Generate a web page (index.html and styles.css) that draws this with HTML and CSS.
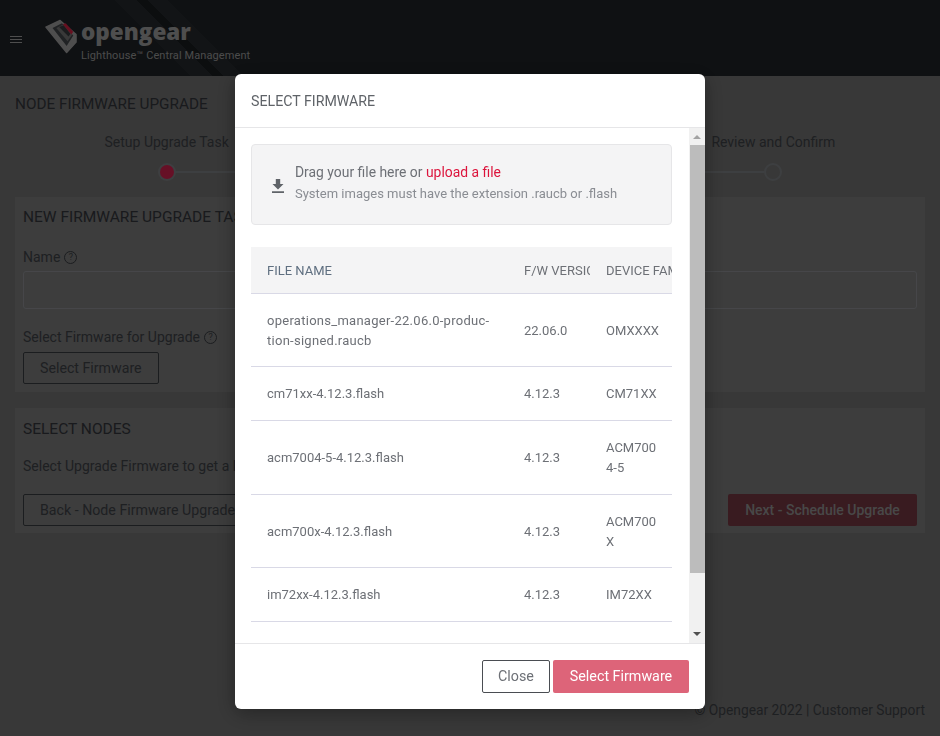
FILE: index.html
```html
<!DOCTYPE html>
<html lang="en">
<head>
<meta charset="utf-8">
<title>Node Firmware Upgrade</title>
<link rel="stylesheet" href="styles.css">
</head>
<body>
<div class="page">
  <header class="topbar">
    <div class="burger"><i></i><i></i><i></i></div>
    <svg class="logo-mark" viewBox="0 0 34 36" width="32" height="35">
      <path d="M1 8 L16 1 L33 16 L33 24 L23 35 Z" fill="#c4c4c4" stroke="#c4c4c4" stroke-linejoin="round" stroke-width="1.500"/>
      <path d="M8 9 L18 4 L30 17 L23 28 Z" fill="#50555a"/>
      <path d="M12 9 L20 5 L29 16 L24 23 Z" fill="#8f8f8f"/>
      <path d="M15 8 L20 6 L27 15 L25 18 Z" fill="#44484c"/>
      <path d="M19 5 L22 4 L30 13 L28 16 Z" fill="#ff2a50"/>
    </svg>
    <div class="brand">
      <div class="brand-name">opengear</div>
      <div class="brand-sub">Lighthouse™ Central Management</div>
    </div>
  </header>
  <main class="content">
    <h1 class="page-title">NODE FIRMWARE UPGRADE</h1>
    <div class="step-labels">
      <span>Setup Upgrade Task</span>
      <span>Schedule Upgrade</span>
      <span>Review and Confirm</span>
    </div>
    <div class="step-track">
      <span class="dot dot-active"></span><span class="line"></span><span class="dot"></span><span class="line"></span><span class="dot"></span>
    </div>
    <section class="card card-task">
      <h2 class="card-title">NEW FIRMWARE UPGRADE TASK</h2>
      <label class="field-label">Name <span class="help">?</span></label>
      <div class="text-input"></div>
      <label class="field-label field-label-second">Select Firmware for Upgrade <span class="help">?</span></label>
      <button class="btn-ghost" type="button">Select Firmware</button>
    </section>
    <section class="card card-nodes">
      <h2 class="card-title">SELECT NODES</h2>
      <p class="hint">Select Upgrade Firmware to get a list of compatible nodes</p>
      <div class="nav-row">
        <button class="btn-ghost" type="button">Back - Node Firmware Upgrade</button>
        <button class="btn-next" type="button">Next - Schedule Upgrade</button>
      </div>
    </section>
  </main>
  <footer class="page-foot">© Opengear 2022 | Customer Support</footer>
</div>

<div class="overlay">
  <div class="modal">
    <div class="modal-head">SELECT FIRMWARE</div>
    <div class="modal-body">
      <div class="modal-scroll">
        <div class="dropzone">
          <svg class="drop-icon" viewBox="0 0 12 14" width="12" height="14"><path d="M3.800 0h4.400v5H11.500L6 10.500 .500 5H3.800z M0 12.200h12V14H0z" fill="#5f6368"/></svg>
          <div>
            <div class="drop-main">Drag your file here or <a class="drop-link">upload a file</a></div>
            <div class="drop-sub">System images must have the extension .raucb or .flash</div>
          </div>
        </div>
        <div class="table-wrap">
          <table class="fw-table">
            <colgroup><col class="col-name"><col class="col-ver"><col class="col-fam"></colgroup>
            <thead>
              <tr><th class="th-name">FILE NAME</th><th><div class="clip">F/W VERSION</div></th><th><div class="clip">DEVICE FAMILY</div></th></tr>
            </thead>
            <tbody>
              <tr class="r-tall"><td class="long-name">operations_manager-22.06.0-produc-<br>tion-signed.raucb</td><td>22.06.0</td><td>OMXXXX</td></tr>
              <tr class="r-short"><td>cm71xx-4.12.3.flash</td><td>4.12.3</td><td>CM71XX</td></tr>
              <tr class="r-tall2"><td>acm7004-5-4.12.3.flash</td><td>4.12.3</td><td>ACM700<br>4-5</td></tr>
              <tr class="r-tall"><td>acm700x-4.12.3.flash</td><td>4.12.3</td><td>ACM700<br>X</td></tr>
              <tr class="r-short"><td>im72xx-4.12.3.flash</td><td>4.12.3</td><td>IM72XX</td></tr>
            </tbody>
          </table>
        </div>
      </div>
      <div class="scrollbar">
        <span class="arrow arrow-up"></span>
        <div class="track"><div class="thumb"></div></div>
        <span class="arrow arrow-down"></span>
      </div>
    </div>
    <div class="modal-foot">
      <button class="btn-close" type="button">Close</button>
      <button class="btn-select" type="button">Select Firmware</button>
    </div>
  </div>
</div>
</body>
</html>
```
FILE: styles.css
```css
* { box-sizing: border-box; }
html, body { margin: 0; height: 100%; }
body {
  font-family: Roboto, "Liberation Sans", sans-serif;
  font-size: 14px;
  color: #4c5056;
  background: #8c8c8c;
  overflow: hidden;
}
.page { height: 736px; display: flex; flex-direction: column; }

.topbar {
  height: 76px;
  display: flex;
  align-items: center;
  flex: none;
  background:
    linear-gradient(45deg, transparent 0 135px, #2e3338 135px 150px, #1f2327 150px 158px, #2e3338 158px 172px, transparent 172px),
    #262b30;
}
.burger { width: 12px; margin: 2px 0 0 10px; display: flex; flex-direction: column; gap: 2px; }
.burger i { display: block; height: 1px; background: #c4c4c4; }
.logo-mark { margin: -4px 0 0 23px; flex: none; }
.brand { margin: 9px 0 0 4px; }
.brand-name {
  font-family: "Open Sans", sans-serif;
  font-weight: 800;
  font-size: 22.500px;
  line-height: 24px;
  color: #c4c4c4;
  margin-top: -3px;
}
.brand-sub { font-size: 11px; line-height: 14px; color: #bcbcbc; margin-top: 5px; letter-spacing: .1px; }

.content { flex: 1; padding: 18px 15px 0; }
.page-title { margin: 0; font-size: 15.300px; line-height: 20px; font-weight: 400; color: #3f4349; }
.step-labels { display: grid; grid-template-columns: repeat(3, 1fr); margin-top: 18px; text-align: center; line-height: 20px; }
.step-track { display: flex; align-items: center; margin: 11px 143px 0; }
.dot { width: 18px; height: 18px; border-radius: 50%; border: 2px solid #9a9ea2; flex: none; }
.dot-active { width: 14px; height: 14px; margin-left: 2px; border: 0; background: #ff2a60; box-shadow: 0 0 0 2px #9a9ea2; }
.line { flex: 1; height: 2px; background: #9a9ea2; }

.card { background: #989898; padding: 10px 8px; }
.card-task { margin-top: 16px; height: 195px; }
.card-nodes { margin-top: 16px; height: 125px; }
.card-title { margin: 0; font-size: 15.500px; line-height: 20px; font-weight: 400; color: #3f4349; }
.card-nodes .card-title { margin-top: 1px; }
.field-label { display: flex; align-items: center; gap: 4px; line-height: 18px; margin-top: 21px; }
.field-label-second { margin-top: 19px; }
.help {
  width: 13px; height: 13px; border: 1px solid #45494f; border-radius: 50%;
  font-size: 9px; line-height: 11px; text-align: center;
}
.text-input { height: 38px; margin-top: 5px; border: 1px solid #aeb0b6; border-radius: 3px; }
.btn-ghost {
  display: block;
  height: 32px; padding: 0 16px;
  margin-top: 6px;
  border: 1px solid #45494f; border-radius: 2px; background: transparent;
  font: inherit; font-size: 14.200px; color: #4c5056;
}
.hint { margin: 17px 0 0; line-height: 20px; }
.nav-row { display: flex; justify-content: space-between; margin-top: 9px; }
.nav-row .btn-ghost { margin-top: 9px; }
.btn-next {
  height: 32px; width: 189px; margin-top: 9px;
  border: 0; border-radius: 2px; background: #8f4450;
  font: inherit; font-weight: 500; color: #b4b4b4;
}
.page-foot { text-align: right; padding: 0 15px 17px; line-height: 18px; font-size: 13.800px; }

.overlay { position: fixed; inset: 0; background: rgba(0, 0, 0, .6); }
.modal {
  width: 470px; height: 635px; margin: 74px auto 0;
  display: flex; flex-direction: column;
  background: #fff; border-radius: 6px;
  box-shadow: 0 4px 20px rgba(0, 0, 0, .35);
  overflow: hidden;
}
.modal-head {
  height: 54px; flex: none; padding: 0 16px;
  display: flex; align-items: center;
  font-size: 14.200px; font-weight: 400; color: #5f6368;
  border-bottom: 1px solid #e6e6e8;
}
.modal-body { flex: 1; min-height: 0; display: flex; }
.modal-scroll { flex: 1; min-width: 0; padding: 16px 17px 0 16px; overflow: hidden; }
.dropzone {
  height: 81px; display: flex; align-items: center; gap: 11px; padding: 0 20px 4px;
  background: #f4f4f5; border: 1px solid #e6e6e8; border-radius: 4px;
}
.drop-icon { flex: none; margin-top: 6px; }
.drop-main { font-size: 13.900px; line-height: 22px; color: #6d7076; }
.drop-link { color: #dc143c; }
.drop-sub { font-size: 13px; line-height: 22px; color: #8a8d93; }
.table-wrap { margin-top: 22px; overflow: hidden; }
.fw-table { width: 421px; table-layout: fixed; border-collapse: collapse; color: #6d7076; font-size: 13px; }
.col-name { width: 257px; }
.col-ver { width: 82px; }
.col-fam { width: 82px; }
.fw-table th {
  height: 46px; padding: 2px 0 0 16px; text-align: left; font-weight: 400;
  background: #f4f4f5; border-bottom: 1px solid #d9d9e6; color: #6d7076;
}
.fw-table .th-name { color: #5f6f80; }
.clip { overflow: hidden; white-space: nowrap; }
.fw-table td { padding: 2px 0 0 16px; line-height: 20px; border-bottom: 1px solid #d9d9e6; }
.fw-table .long-name { letter-spacing: .27px; }
.r-tall { height: 73px; }
.r-tall2 { height: 74px; }
.r-short { height: 54px; }

.scrollbar { width: 16px; flex: none; display: flex; flex-direction: column; background: #f1f1f1; }
.arrow { height: 17px; flex: none; position: relative; }
.arrow::after {
  content: ""; position: absolute; left: 4px; border-left: 4px solid transparent; border-right: 4px solid transparent;
}
.arrow-up::after { top: 7px; border-bottom: 4px solid #a3a3a3; }
.arrow-down::after { top: 6px; border-top: 4px solid #505050; }
.track { flex: 1; }
.thumb { height: 428px; background: #bcbcbc; margin-left: 1px; }

.modal-foot {
  height: 66px; flex: none; padding: 16px; display: flex; justify-content: flex-end; gap: 3px;
  border-top: 1px solid #e6e6e8;
}
.btn-close, .btn-select {
  height: 33px; padding: 0 0 2px; border-radius: 2px; font: inherit; font-size: 14.300px;
}
.btn-close { width: 68px; background: #fff; border: 1px solid #4a4d52; color: #6d7076; }
.btn-select { width: 136px; background: #dd6479; border: 0; color: #fff; font-weight: 400; }
```
